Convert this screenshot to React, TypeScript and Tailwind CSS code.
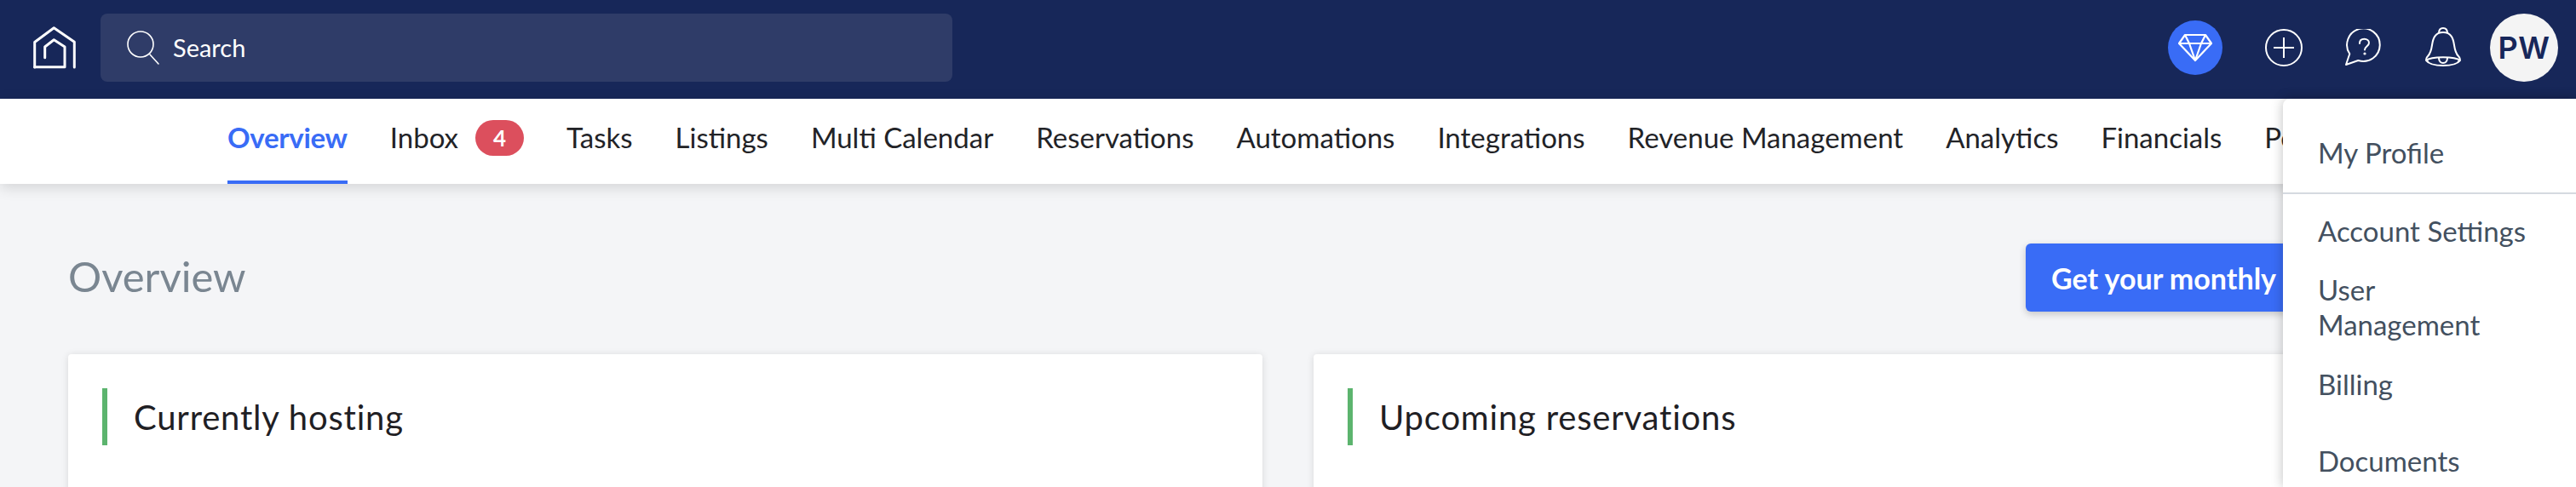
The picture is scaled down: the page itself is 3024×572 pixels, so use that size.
const font = { fontFamily: '"Lato", "Noto Sans", sans-serif' };

function Logo() {
  return (
    <svg width="52" height="52" viewBox="0 0 52 52" fill="none" stroke="#fff" strokeWidth="3" strokeLinecap="round" strokeLinejoin="round">
      <path d="M2.7 49V19.5L25.3 2.7L49.3 19.3V49" />
      <path d="M2.7 48.7H38V25L25.3 16.7L14.7 25V37.7" />
    </svg>
  );
}

function SearchIcon() {
  return (
    <svg width="40" height="42" viewBox="0 0 40 42" fill="none" stroke="#fff" strokeWidth="1.6" strokeLinecap="round">
      <circle cx="16" cy="17" r="15" />
      <path d="M27 29L37 40" />
    </svg>
  );
}

function Diamond() {
  return (
    <svg width="40" height="34" viewBox="0 0 40 34" fill="none" stroke="#fff" strokeWidth="2.2" strokeLinejoin="round">
      <path d="M8 2H32L39 12L20 32L1 12Z" />
      <path d="M1 12H39M8 2L13 12L20 32L27 12L32 2" />
    </svg>
  );
}

function Plus() {
  return (
    <svg width="44" height="44" viewBox="0 0 44 44" fill="none" stroke="#fff" strokeWidth="2">
      <circle cx="22" cy="22" r="21" />
      <path d="M10 22H34M22 10V34" />
    </svg>
  );
}

function Question() {
  return (
    <svg width="44" height="44" viewBox="0 0 44 44" fill="none" stroke="#fff" strokeWidth="2" strokeLinejoin="round" strokeLinecap="round">
      <path d="M5.3 29.3L1 42L15.3 37A19.3 19.3 0 1 0 5.3 29.3Z" />
      <path d="M17 17C17 13.5 19.5 11.8 22.5 11.8C25.5 11.8 28 13.8 28 16.5C28 20 23 20.5 23 24.5" />
      <circle cx="23" cy="29" r="0.6" fill="#fff" />
    </svg>
  );
}

function Bell() {
  return (
    <svg width="42" height="48" viewBox="0 0 42 48" fill="none" stroke="#fff" strokeWidth="2" strokeLinejoin="round">
      <path d="M16 7C16 3 18 1 21 1C24 1 26 3 26 7" />
      <path d="M21 6C11 6 9 14 8 21C7 28 6 31 3 34C0 37 1 39 4 41" />
      <path d="M21 6C31 6 33 14 34 21C35 28 36 31 39 34C42 37 41 39 38 41" />
      <path d="M1 39C7 34 35 34 41 39C35 47 7 47 1 39Z" />
      <path d="M16 36C16 44 26 44 26 36" />
    </svg>
  );
}

const items = ['Multi Calendar', 'Reservations', 'Automations', 'Integrations', 'Revenue Management', 'Analytics', 'Financials', 'Performance'];

function Card({ title }: { title: string }) {
  return (
    <div className="flex-1 bg-white rounded-[4px] shadow-[0_1px_8px_rgba(0,0,0,0.12)] pt-[40px] pl-[40px] h-[300px]">
      <div className="flex items-center h-[67px] border-l-[6px] border-[#5cb46e] pl-[31px] text-[40px] tracking-[0.8px] text-[#1f2024]">{title}</div>
    </div>
  );
}

export default function App() {
  return (
    <div className="relative w-[3024px] h-[572px] overflow-hidden bg-[#f4f5f7]" style={font}>
      <header className="flex items-center h-[116px] bg-[#172759] pb-[4px] pl-[38px] pr-[21px]">
        <Logo />
        <div className="flex items-center gap-[14px] w-[1000px] h-[80px] ml-[28px] pl-[31px] bg-[#2f3c68] rounded-[8px] text-white text-[29px]">
          <SearchIcon />
          <span>Search</span>
        </div>
        <div className="flex items-center ml-auto">
          <div className="flex items-center justify-center w-[64px] h-[64px] rounded-full bg-[#396cf6]"><Diamond /></div>
          <div className="ml-[50px]"><Plus /></div>
          <div className="ml-[50px]"><Question /></div>
          <div className="ml-[50px]"><Bell /></div>
          <div className="flex items-center justify-center ml-[34px] w-[80px] h-[80px] rounded-full bg-[#f4f4f4] text-[#17275a] text-[36px] tracking-[0.5px] font-semibold" style={{ fontFamily: 'Inter, sans-serif' }}>PW</div>
        </div>
      </header>
      <nav className="relative flex items-stretch gap-[50px] h-[100px] pl-[267px] bg-white shadow-[0_4px_16px_rgba(0,0,0,0.14)] text-[33px] text-[#222327] whitespace-nowrap overflow-hidden">
        <div className="flex items-center pb-[4px] font-bold tracking-[-0.3px] text-[#396cf6] border-b-[4px] border-[#396cf6]">Overview</div>
        <div className="flex items-center gap-[20px] pb-[8px]">
          <span>Inbox</span>
          <span className="flex items-center justify-center w-[57px] h-[42px] rounded-full bg-[#dc4f5d] text-white text-[26px] font-bold">4</span>
        </div>
        <div className="flex items-center pb-[8px]">Tasks</div>
        <div className="flex items-center pb-[8px]">Listings</div>
        {items.map((t) => (
          <div key={t} className="flex items-center pb-[8px]">{t}</div>
        ))}
      </nav>
      <main className="px-[80px]">
        <div className="flex items-center justify-between h-[200px] pt-[20px]">
          <h1 className="mb-[3px] text-[49px] text-[#7a8691]">Overview</h1>
          <button className="w-[566px] h-[80px] pl-[30px] text-left rounded-[6px] bg-[#396cf6] text-white text-[34px] font-bold shadow-[0_3px_8px_rgba(0,0,0,0.2)]">Get your monthly report</button>
        </div>
        <div className="flex gap-[60px]">
          <Card title="Currently hosting" />
          <Card title="Upcoming reservations" />
        </div>
      </main>
      <aside className="absolute top-[116px] left-[2680px] right-0 h-[456px] bg-white rounded-tl-[8px] shadow-[0_0_14px_rgba(0,0,0,0.25)] text-[33px] text-[#43505f]">
        <div className="flex items-center h-[112px] pt-[18px] pl-[41px] border-b-[2px] border-[#d5dae0]">My Profile</div>
        <div className="pl-[41px] pr-[20px] leading-[41px]">
          <div className="mt-[23px]">Account Settings</div>
          <div className="mt-[28px]">User<br />Management</div>
          <div className="mt-[29px]">Billing</div>
          <div className="mt-[49px]">Documents</div>
        </div>
      </aside>
    </div>
  );
}
